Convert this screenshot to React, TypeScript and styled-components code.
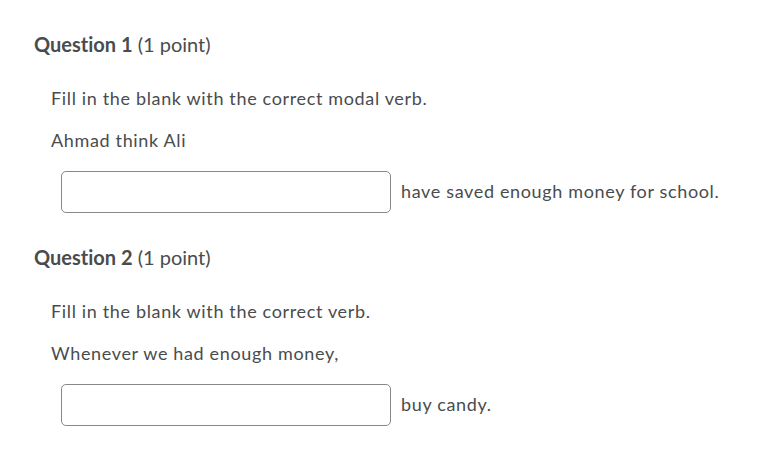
import styled, { createGlobalStyle } from 'styled-components';

const GlobalStyle = createGlobalStyle`
  body {
    margin: 0;
    background: #fff;
    font-family: Lato, "Open Sans", sans-serif;
    color: #494c4e;
    font-variant-ligatures: none;
  }
`;

const Page = styled.div`
  padding: 32px 0 0 34px;
  display: flex;
  flex-direction: column;
  gap: 32px;
`;

const Question = styled.section`
  display: flex;
  flex-direction: column;
`;

const Heading = styled.h2`
  margin: 0;
  font-size: 20px;
  line-height: 24px;
  font-weight: 400;
  color: #494c4e;
`;

const Strong = styled.strong`
  font-weight: 700;
`;

const Body = styled.div`
  padding: 30px 0 0 17px;
  display: flex;
  flex-direction: column;
  gap: 18px;
`;

const Text = styled.p`
  margin: 0;
  font-size: 18px;
  line-height: 24px;
  letter-spacing: 0.65px;
`;

const BlankRow = styled.div`
  display: flex;
  align-items: center;
  gap: 10px;
  padding-left: 10px;
  margin-top: 1px;
`;

const Blank = styled.input`
  box-sizing: border-box;
  width: 330px;
  height: 42px;
  border: 1px solid #868a8d;
  border-radius: 5px;
  background: #fff;
  padding: 0 10px;
  font: inherit;
  outline: none;
`;

const Tail = styled.span`
  font-size: 18px;
  line-height: 24px;
  letter-spacing: 0.65px;
  margin-top: -2px;
`;

type Q = { num: number; prompt: string; lead: string; tail: string };

const questions: Q[] = [
  {
    num: 1,
    prompt: 'Fill in the blank with the correct modal verb.',
    lead: 'Ahmad think Ali',
    tail: 'have saved enough money for school.',
  },
  {
    num: 2,
    prompt: 'Fill in the blank with the correct verb.',
    lead: 'Whenever we had enough money,',
    tail: 'buy candy.',
  },
];

export default function App() {
  return (
    <>
      <GlobalStyle />
      <Page>
        {questions.map((q) => (
          <Question key={q.num}>
            <Heading>
              <Strong>Question {q.num}</Strong> (1 point)
            </Heading>
            <Body>
              <Text>{q.prompt}</Text>
              <Text>{q.lead}</Text>
              <BlankRow>
                <Blank type="text" aria-label={`Question ${q.num} answer`} />
                <Tail>{q.tail}</Tail>
              </BlankRow>
            </Body>
          </Question>
        ))}
      </Page>
    </>
  );
}
